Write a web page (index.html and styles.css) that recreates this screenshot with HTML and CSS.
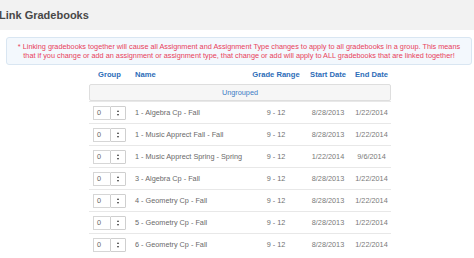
FILE: index.html
```html
<!DOCTYPE html>
<html lang="en">
  <head>
    <title>Link Gradebooks</title>
    <link rel="stylesheet" href="styles.css">
  </head>
  <body>
    <div class="page-header">
      <h1>Link Gradebooks</h1>
    </div>
    <div class="notice">
      * Linking gradebooks together will cause all Assignment and Assignment Type changes to apply to all gradebooks in a group. This means<br>
      that if you change or add an assignment or assignment type, that change or add will apply to ALL gradebooks that are linked together!
    </div>
    <table class="links">
      <thead>
        <tr>
          <th class="col-group">Group</th>
          <th class="col-name">Name</th>
          <th class="col-range">Grade Range</th>
          <th class="col-start">Start Date</th>
          <th class="col-end">End Date</th>
        </tr>
      </thead>
      <tbody>
        <tr class="group-row">
          <td colspan="5"><div class="group-label">Ungrouped</div></td>
        </tr>
        <tr>
          <td class="col-group"><div class="spinner"><span class="val">0</span><span class="arrows"><i class="up"></i><i class="down"></i></span></div></td>
          <td class="col-name">1 - Algebra Cp - Fall</td>
          <td class="col-range">9 - 12</td>
          <td class="col-start">8/28/2013</td>
          <td class="col-end">1/22/2014</td>
        </tr>
        <tr>
          <td class="col-group"><div class="spinner"><span class="val">0</span><span class="arrows"><i class="up"></i><i class="down"></i></span></div></td>
          <td class="col-name">1 - Music Apprect Fall - Fall</td>
          <td class="col-range">9 - 12</td>
          <td class="col-start">8/28/2013</td>
          <td class="col-end">1/22/2014</td>
        </tr>
        <tr>
          <td class="col-group"><div class="spinner"><span class="val">0</span><span class="arrows"><i class="up"></i><i class="down"></i></span></div></td>
          <td class="col-name">1 - Music Apprect Spring - Spring</td>
          <td class="col-range">9 - 12</td>
          <td class="col-start">1/22/2014</td>
          <td class="col-end">9/6/2014</td>
        </tr>
        <tr>
          <td class="col-group"><div class="spinner"><span class="val">0</span><span class="arrows"><i class="up"></i><i class="down"></i></span></div></td>
          <td class="col-name">3 - Algebra Cp - Fall</td>
          <td class="col-range">9 - 12</td>
          <td class="col-start">8/28/2013</td>
          <td class="col-end">1/22/2014</td>
        </tr>
        <tr>
          <td class="col-group"><div class="spinner"><span class="val">0</span><span class="arrows"><i class="up"></i><i class="down"></i></span></div></td>
          <td class="col-name">4 - Geometry Cp - Fall</td>
          <td class="col-range">9 - 12</td>
          <td class="col-start">8/28/2013</td>
          <td class="col-end">1/22/2014</td>
        </tr>
        <tr>
          <td class="col-group"><div class="spinner"><span class="val">0</span><span class="arrows"><i class="up"></i><i class="down"></i></span></div></td>
          <td class="col-name">5 - Geometry Cp - Fall</td>
          <td class="col-range">9 - 12</td>
          <td class="col-start">8/28/2013</td>
          <td class="col-end">1/22/2014</td>
        </tr>
        <tr>
          <td class="col-group"><div class="spinner"><span class="val">0</span><span class="arrows"><i class="up"></i><i class="down"></i></span></div></td>
          <td class="col-name">6 - Geometry Cp - Fall</td>
          <td class="col-range">9 - 12</td>
          <td class="col-start">8/28/2013</td>
          <td class="col-end">1/22/2014</td>
        </tr>
      </tbody>
    </table>
  </body>
</html>
```

FILE: styles.css
```css
body {
  margin: 0;
  font-family: "Liberation Sans", Arial, sans-serif;
  background: #fff;
  color: #666;
}

.page-header {
  height: 30px;
  background: #f2f2f2;
  display: flex;
  align-items: center;
}

.page-header h1 {
  margin: 0 0 0 -1px;
  font-size: 11px;
  font-weight: bold;
  color: #484848;
}

.notice {
  margin: 7px 2px 0 6px;
  height: 28px;
  padding-top: 4px;
  box-sizing: border-box;
  background: #f3f8fd;
  border: 1px solid #d9e6f2;
  border-radius: 3px;
  color: #e8415c;
  font-size: 7.3px;
  line-height: 9px;
  text-align: center;
}

.links {
  margin: 1px 0 0 89px;
  width: 302px;
  border-collapse: collapse;
  table-layout: fixed;
  font-size: 7.3px;
}

.links th {
  height: 16px;
  padding: 0;
  color: #2d6db8;
  font-weight: bold;
  font-size: 7.6px;
}

.links td {
  height: 21px;
  padding: 0;
  border-top: 1px solid #e8e8e8;
}

.col-group { width: 41px; text-align: center; }
.col-name { width: 113px; text-align: left; padding-left: 5px !important; }
.col-range { width: 56px; text-align: center; }
.col-start { width: 48px; text-align: center; }
.col-end { text-align: center; }

.links td.col-name { color: #6a6a6a; }
.links td.col-range { color: #6f6f6f; }
.links td.col-start,
.links td.col-end { color: #7a7a7a; }

.links .group-row td {
  height: 19px;
  border-top: none;
  padding: 0;
}

.group-label {
  margin-top: 1px;
  height: 17px;
  box-sizing: border-box;
  border: 1px solid #dedede;
  border-radius: 2px;
  background: #f6f6f6;
  color: #3b7cc5;
  text-align: center;
  line-height: 15px;
}

.spinner {
  display: flex;
  margin-left: 4px;
  width: 33px;
  height: 14px;
}

.spinner .val {
  width: 17px;
  box-sizing: border-box;
  border: 1px solid #d6d6d6;
  border-right: none;
  text-align: left;
  padding-left: 3px;
  line-height: 12px;
  color: #666;
}

.spinner .arrows {
  width: 16px;
  box-sizing: border-box;
  border: 1px solid #cfcfcf;
  border-radius: 1px;
  display: flex;
  flex-direction: column;
  align-items: center;
  justify-content: center;
  gap: 2px;
}

.arrows i {
  display: block;
  width: 0;
  height: 0;
  border-left: 1.5px solid transparent;
  border-right: 1.5px solid transparent;
}

.arrows .up { border-bottom: 2px solid #333; }
.arrows .down { border-top: 2px solid #333; }
```
